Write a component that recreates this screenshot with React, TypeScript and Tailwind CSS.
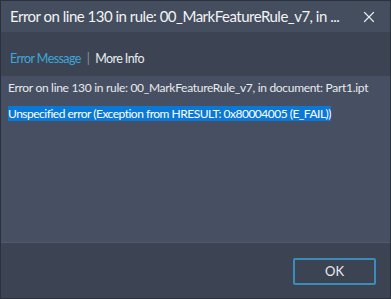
import { X } from 'lucide-react';

export default function App() {
  return (
    <div
      className="flex h-[299px] w-[391px] flex-col overflow-hidden border border-[#2b313c] bg-[#3c4454] text-[#e8eaee]"
      style={{ fontFamily: 'Lato, "Liberation Sans", sans-serif' }}
    >
      {/* Title bar */}
      <div className="flex h-[31px] shrink-0 items-center justify-between bg-[#454e5f] pr-[12px] pl-[9px]">
        <span className="text-[15px] leading-none tracking-[-0.5px] whitespace-nowrap text-[#f2f3f5]">
          Error on line 130 in rule: 00_MarkFeatureRule_v7, in ...
        </span>
        <X className="h-[18px] w-[18px] text-[#e6e8ec]" strokeWidth={1.6} />
      </div>

      {/* Tabs */}
      <div className="flex h-[44px] shrink-0 items-end gap-[6px] pb-[11px] pl-[9px] text-[12.5px] leading-none tracking-[-0.6px]">
        <span className="text-[#3ea6d8]">Error Message</span>
        <span className="text-[#8b93a2]">|</span>
        <span className="text-[#e8eaee]">More Info</span>
      </div>

      {/* Message body */}
      <div className="flex h-[166px] shrink-0 flex-col gap-[12px] bg-[#475062] px-[7px] pt-[5px] text-[12px] leading-[14px] tracking-[-0.3px]">
        <p className="whitespace-nowrap">
          Error on line 130 in rule: 00_MarkFeatureRule_v7, in document: Part1.ipt
        </p>
        <p className="whitespace-nowrap">
          <span className="bg-[#0a78d6] tracking-[-0.5px] text-white">
            Unspecified error (Exception from HRESULT: 0x80004005 (E_FAIL))
          </span>
        </p>
      </div>

      {/* Footer */}
      <div className="flex flex-1 items-start justify-end border-t border-[#515a6b] pt-[15px] pr-[14px]">
        <button className="h-[27px] w-[83px] rounded-[2px] border-2 border-[#3a8db8] text-[13px] text-[#e8eaee]">
          OK
        </button>
      </div>
    </div>
  );
}
